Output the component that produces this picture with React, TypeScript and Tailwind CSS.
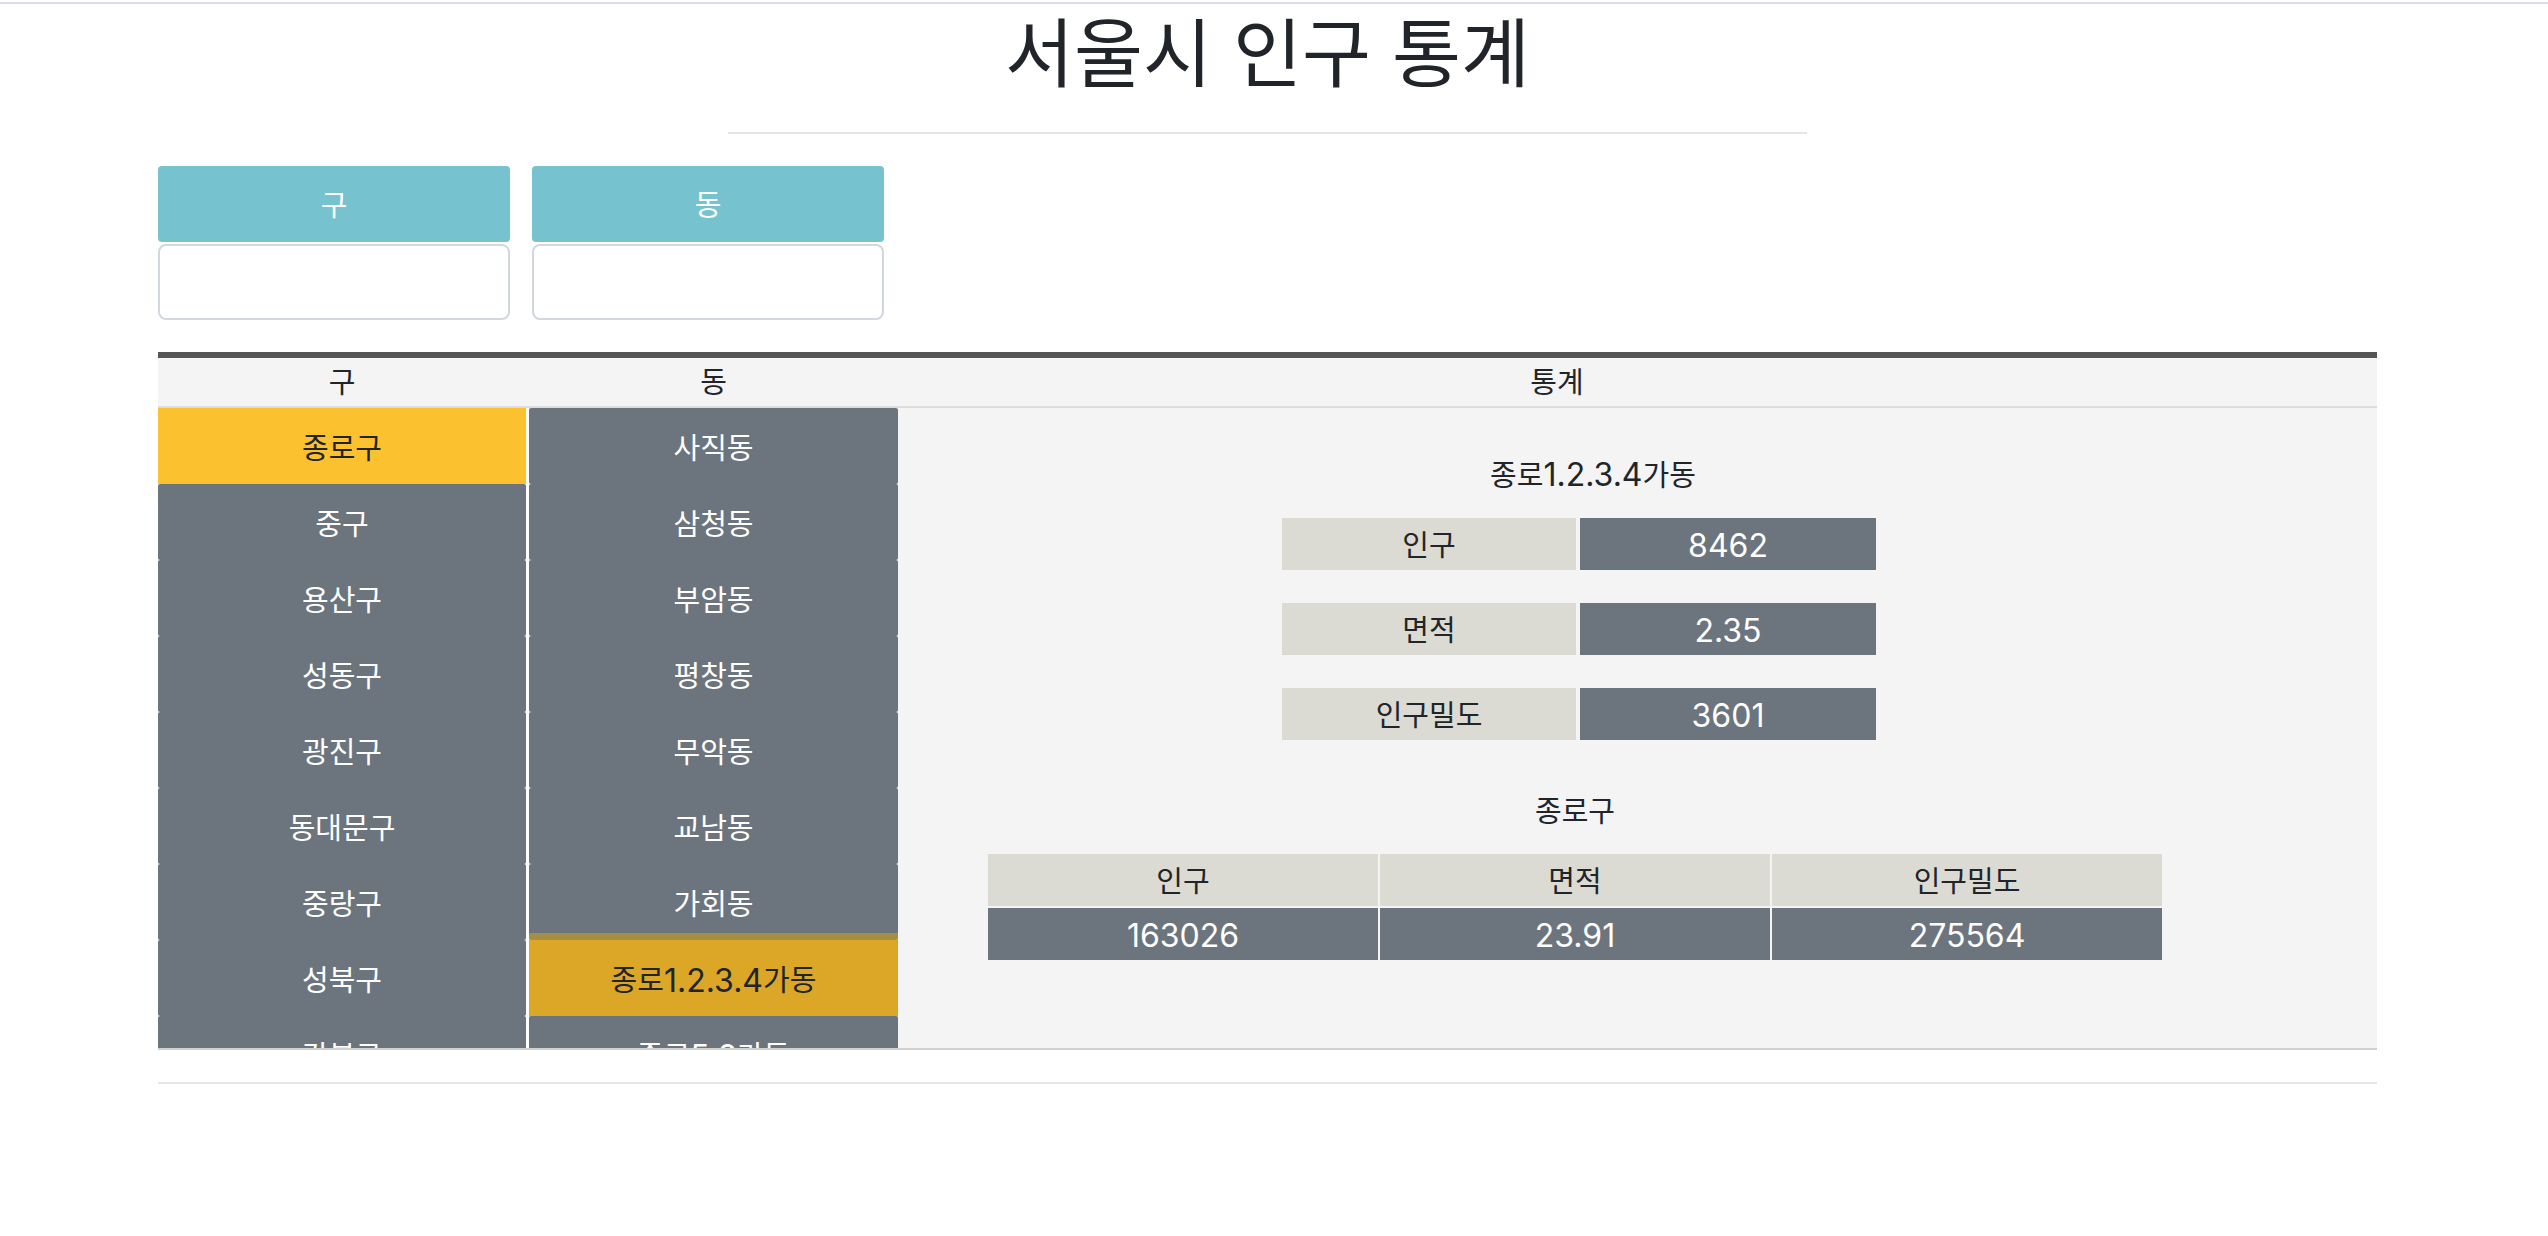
import React from "react";

const gu = ["종로구", "중구", "용산구", "성동구", "광진구", "동대문구", "중랑구", "성북구", "강북구"];
const dong = ["사직동", "삼청동", "부암동", "평창동", "무악동", "교남동", "가회동", "종로1.2.3.4가동", "종로5.6가동"];

function T({ s }: { s: string }) {
  const parts = s.split(/([0-9.]+)/);
  return (
    <>
      {parts.map((p, i) =>
        /^[0-9.]+$/.test(p) ? (
          <span key={i} className="text-[32px]">
            {p}
          </span>
        ) : p ? (
          <span key={i}>{p}</span>
        ) : null
      )}
    </>
  );
}

function StatRow({ label, value }: { label: string; value: string }) {
  return (
    <div className="flex gap-[4px] h-[52px]">
      <div className="w-[294px] bg-[#dbdbd3] flex items-center justify-center pt-[4px] leading-[48px] text-[#212529]">
        <T s={label} />
      </div>
      <div className="w-[296px] bg-[#6c757d] flex items-center justify-center pt-[4px] leading-[48px] text-white">
        <T s={value} />
      </div>
    </div>
  );
}

export default function App() {
  return (
    <div className="min-h-screen bg-white text-[#212529] text-[29px] font-['Inter','Noto_Sans_CJK_KR',sans-serif]">
      <div className="pt-[2px]">
        <div className="h-[2px] bg-[#dddce4]" />
      </div>
      <div className="pr-[13px]">
        <h1 className="mt-[10px] h-[80px] text-center text-[75px] leading-[80px] font-normal">서울시 인구 통계</h1>
        <div className="mx-auto mt-[38px] h-[2px] w-[1079px] bg-[#e4e4e7]" />

        <div className="mx-auto w-[2219px]">
          <div className="mt-[32px] flex gap-[22px]">
            <div className="flex w-[352px] flex-col gap-[2px]">
              <div className="flex h-[76px] items-center justify-center rounded-[4px] bg-[#76c3cf] pt-[4px] leading-[72px] text-white">구</div>
              <div className="h-[76px] rounded-[8px] border-2 border-[#d3d7de] bg-white" />
            </div>
            <div className="flex w-[352px] flex-col gap-[2px]">
              <div className="flex h-[76px] items-center justify-center rounded-[4px] bg-[#76c3cf] pt-[4px] leading-[72px] text-white">동</div>
              <div className="h-[76px] rounded-[8px] border-2 border-[#d3d7de] bg-white" />
            </div>
          </div>

          <div className="mt-[32px] border-t-[6px] border-[#555555]">
            <div className="flex h-[50px] border-b-2 border-[#dcdcdc] bg-[#f4f4f4] pt-[2px] leading-[46px]">
              <div className="w-[368px] text-center">구</div>
              <div className="w-[3px]" />
              <div className="w-[369px] text-center">동</div>
              <div className="w-[1318px] text-center">통계</div>
              <div className="flex-1" />
            </div>

            <div className="flex h-[640px]">
              <div className="w-[368px] overflow-hidden">
                {gu.map((g, i) => (
                  <div
                    key={g}
                    className={
                      i === 0
                        ? "flex h-[76px] items-center justify-center bg-[#fcc12e] pt-[5px] leading-[71px] text-[#212529]"
                        : "flex h-[76px] items-center justify-center rounded-[2px] bg-[#6c757d] pt-[5px] leading-[71px] text-white"
                    }
                  >
                    <T s={g} />
                  </div>
                ))}
              </div>
              <div className="w-[3px] bg-white" />
              <div className="w-[369px] overflow-hidden">
                {dong.map((d, i) => (
                  <div
                    key={d}
                    className={
                      i === 7
                        ? "flex h-[76px] items-center justify-center bg-[#dca626] pt-[5px] leading-[71px] text-[#212529] shadow-[0_0_0_7px_rgba(222,170,12,0.5)]"
                        : "flex h-[76px] items-center justify-center rounded-[2px] bg-[#6c757d] pt-[5px] leading-[71px] text-white"
                    }
                  >
                    <T s={d} />
                  </div>
                ))}
              </div>
              <div className="flex-1 bg-[#f4f4f4]">
                <div className="flex w-[1354px] flex-col items-center">
                  <div className="ml-[36px] mt-[43px] h-[48px] leading-[48px]">
                    <T s="종로1.2.3.4가동" />
                  </div>
                  <div className="ml-[8px] mt-[19px] flex flex-col gap-[33px]">
                    <StatRow label="인구" value="8462" />
                    <StatRow label="면적" value="2.35" />
                    <StatRow label="인구밀도" value="3601" />
                  </div>
                  <div className="mt-[48px] h-[48px] leading-[48px]">종로구</div>
                  <div className="mt-[18px] flex w-[1174px] flex-col gap-[2px]">
                    <div className="flex h-[52px] gap-[2px]">
                      {["인구", "면적", "인구밀도"].map((h) => (
                        <div key={h} className="flex flex-1 items-center justify-center bg-[#dbdbd3] pt-[4px] leading-[48px]">
                          {h}
                        </div>
                      ))}
                    </div>
                    <div className="flex h-[52px] gap-[2px]">
                      {["163026", "23.91", "275564"].map((v) => (
                        <div key={v} className="flex flex-1 items-center justify-center bg-[#6c757d] pt-[4px] leading-[48px] text-white">
                          <T s={v} />
                        </div>
                      ))}
                    </div>
                  </div>
                </div>
              </div>
            </div>
            <div className="h-[2px] bg-[#d0d0d0]" />
          </div>
          <div className="mt-[32px] h-[2px] bg-[#e5e5e5]" />
        </div>
      </div>
    </div>
  );
}
